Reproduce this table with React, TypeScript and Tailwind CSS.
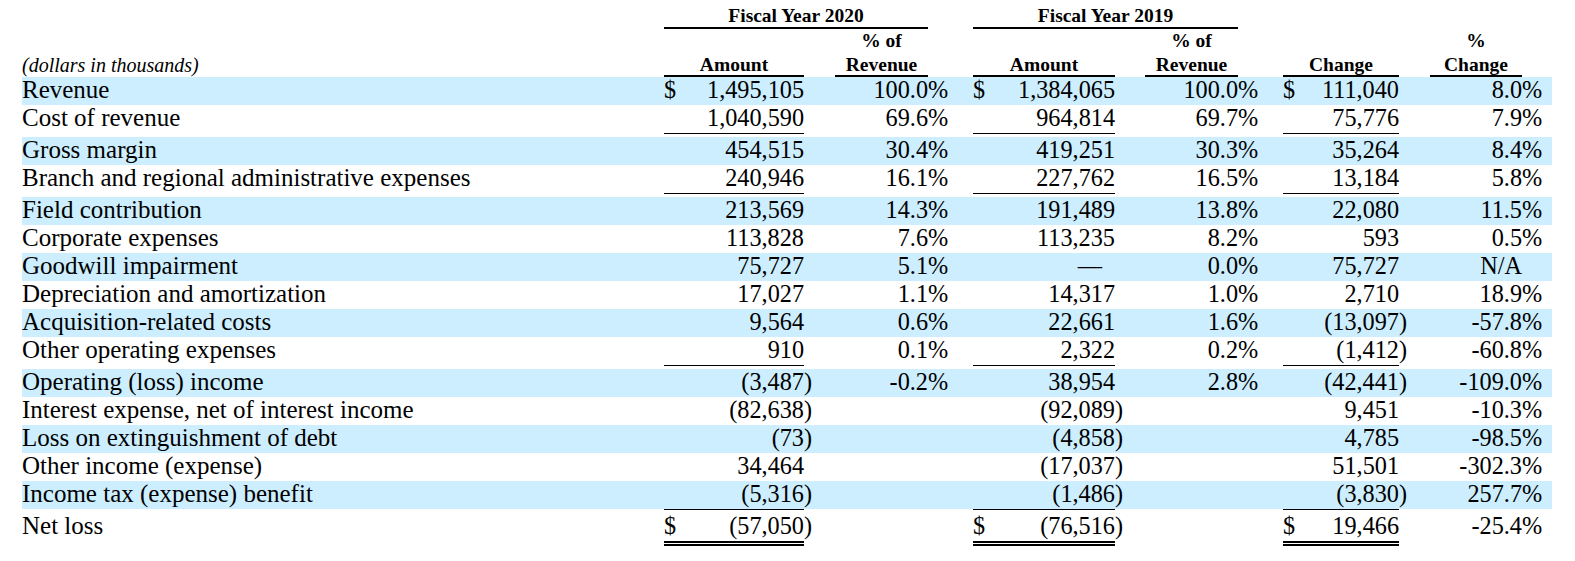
type Line = "single" | "double" | undefined;

type Row = {
  label: string;
  a20: string;
  p20: string;
  a19: string;
  p19: string;
  ch: string;
  pch: string;
  dollar?: boolean;
  line?: Line;
};

const rows: Row[] = [
  { label: "Revenue", a20: "1,495,105", p20: "100.0", a19: "1,384,065", p19: "100.0", ch: "111,040", pch: "8.0", dollar: true },
  { label: "Cost of revenue", a20: "1,040,590", p20: "69.6", a19: "964,814", p19: "69.7", ch: "75,776", pch: "7.9", line: "single" },
  { label: "Gross margin", a20: "454,515", p20: "30.4", a19: "419,251", p19: "30.3", ch: "35,264", pch: "8.4" },
  { label: "Branch and regional administrative expenses", a20: "240,946", p20: "16.1", a19: "227,762", p19: "16.5", ch: "13,184", pch: "5.8", line: "single" },
  { label: "Field contribution", a20: "213,569", p20: "14.3", a19: "191,489", p19: "13.8", ch: "22,080", pch: "11.5" },
  { label: "Corporate expenses", a20: "113,828", p20: "7.6", a19: "113,235", p19: "8.2", ch: "593", pch: "0.5" },
  { label: "Goodwill impairment", a20: "75,727", p20: "5.1", a19: "—", p19: "0.0", ch: "75,727", pch: "N/A" },
  { label: "Depreciation and amortization", a20: "17,027", p20: "1.1", a19: "14,317", p19: "1.0", ch: "2,710", pch: "18.9" },
  { label: "Acquisition-related costs", a20: "9,564", p20: "0.6", a19: "22,661", p19: "1.6", ch: "(13,097)", pch: "-57.8" },
  { label: "Other operating expenses", a20: "910", p20: "0.1", a19: "2,322", p19: "0.2", ch: "(1,412)", pch: "-60.8", line: "single" },
  { label: "Operating (loss) income", a20: "(3,487)", p20: "-0.2", a19: "38,954", p19: "2.8", ch: "(42,441)", pch: "-109.0" },
  { label: "Interest expense, net of interest income", a20: "(82,638)", p20: "", a19: "(92,089)", p19: "", ch: "9,451", pch: "-10.3" },
  { label: "Loss on extinguishment of debt", a20: "(73)", p20: "", a19: "(4,858)", p19: "", ch: "4,785", pch: "-98.5" },
  { label: "Other income (expense)", a20: "34,464", p20: "", a19: "(17,037)", p19: "", ch: "51,501", pch: "-302.3" },
  { label: "Income tax (expense) benefit", a20: "(5,316)", p20: "", a19: "(1,486)", p19: "", ch: "(3,830)", pch: "257.7", line: "single" },
  { label: "Net loss", a20: "(57,050)", p20: "", a19: "(76,516)", p19: "", ch: "19,466", pch: "-25.4", dollar: true, line: "double" },
];

function Amount({ value, dollar, line, width }: { value: string; dollar?: boolean; line: Line; width: string }) {
  const neg = value.startsWith("(");
  const num = neg ? value.slice(0, -1) : value;
  const lineCls =
    line === "single"
      ? "h-[29px] border-b border-black"
      : line === "double"
        ? "h-[33px] border-b-[5px] border-double border-black"
        : "h-[28px]";
  return (
    <>
      <div className={`${width} ${lineCls} flex justify-between shrink-0`}>
        <span>{dollar ? "$" : ""}</span>
        <span className={value === "—" ? "pr-[13px]" : ""}>{num}</span>
      </div>
      {/* closing paren hangs past the column edge */}
      <div className="w-0 overflow-visible">{neg ? ")" : ""}</div>
    </>
  );
}

function Pct({ value, width, signWidth }: { value: string; width: string; signWidth: string }) {
  const noSign = value === "N/A" || value === "";
  return (
    <>
      <div className={`${width} text-right shrink-0`}>{value}</div>
      <div className={`${signWidth} shrink-0`}>{noSign ? "" : "%"}</div>
    </>
  );
}

function DataRow({ row, shaded }: { row: Row; shaded: boolean }) {
  const gap = row.line === "single" ? "mb-[4px]" : "";
  return (
    <div className={`flex h-[28px] leading-[25px] ${shaded ? "bg-[#cceeff]" : ""} ${gap}`}>
      <div className="w-[642px] shrink-0 text-[25px] whitespace-nowrap">{row.label}</div>
      <div className="flex text-[24.25px]">
        <Amount value={row.a20} dollar={row.dollar} line={row.line} width="w-[140px]" />
        <div className="w-[31px] shrink-0" />
        <Pct value={row.p20} width="w-[93px]" signWidth="w-[45px]" />
        <Amount value={row.a19} dollar={row.dollar} line={row.line} width="w-[142px]" />
        <div className="w-[30px] shrink-0" />
        <Pct value={row.p19} width="w-[93px]" signWidth="w-[45px]" />
        <Amount value={row.ch} dollar={row.dollar} line={row.line} width="w-[116px]" />
        <div className="w-[31px] shrink-0" />
        <Pct value={row.pch} width="w-[92px]" signWidth="w-[30px]" />
      </div>
    </div>
  );
}

function HeadCell({ width, children }: { width: string; children: React.ReactNode }) {
  return (
    <div className={`${width} h-[48px] shrink-0 flex flex-col justify-end items-center border-b-2 border-black leading-[24px]`}>
      <div className="flex flex-col items-center translate-y-[2px]">{children}</div>
    </div>
  );
}

export default function App() {
  return (
    <div className="w-[1575px] h-[561px] bg-white text-black font-['Liberation_Serif','Times_New_Roman',serif] overflow-hidden">
      <div className="ml-[22px] w-[1530px]">
        {/* fiscal year groups */}
        <div className="flex h-[29px] text-[19.5px] font-bold leading-[21px]">
          <div className="w-[642px] shrink-0" />
          <div className="w-[264px] shrink-0 border-b-2 border-black text-center pt-[5px]">Fiscal Year 2020</div>
          <div className="w-[45px] shrink-0" />
          <div className="w-[265px] shrink-0 border-b-2 border-black text-center pt-[5px]">Fiscal Year 2019</div>
        </div>

        {/* column headers */}
        <div className="flex h-[48px] text-[19.5px] font-bold">
          <div className="w-[642px] shrink-0 flex items-end pb-[2px]">
            <span className="text-[20px] font-normal italic leading-[20px]">(dollars in thousands)</span>
          </div>
          <HeadCell width="w-[140px]">
            <span>Amount</span>
          </HeadCell>
          <div className="w-[31px] shrink-0" />
          <HeadCell width="w-[93px]">
            <span>% of</span>
            <span>Revenue</span>
          </HeadCell>
          <div className="w-[45px] shrink-0" />
          <HeadCell width="w-[142px]">
            <span>Amount</span>
          </HeadCell>
          <div className="w-[30px] shrink-0" />
          <HeadCell width="w-[93px]">
            <span>% of</span>
            <span>Revenue</span>
          </HeadCell>
          <div className="w-[45px] shrink-0" />
          <HeadCell width="w-[116px]">
            <span>Change</span>
          </HeadCell>
          <div className="w-[31px] shrink-0" />
          <HeadCell width="w-[92px]">
            <span>%</span>
            <span>Change</span>
          </HeadCell>
        </div>

        {rows.map((row, i) => (
          <DataRow key={row.label} row={row} shaded={i % 2 === 0} />
        ))}
      </div>
    </div>
  );
}
